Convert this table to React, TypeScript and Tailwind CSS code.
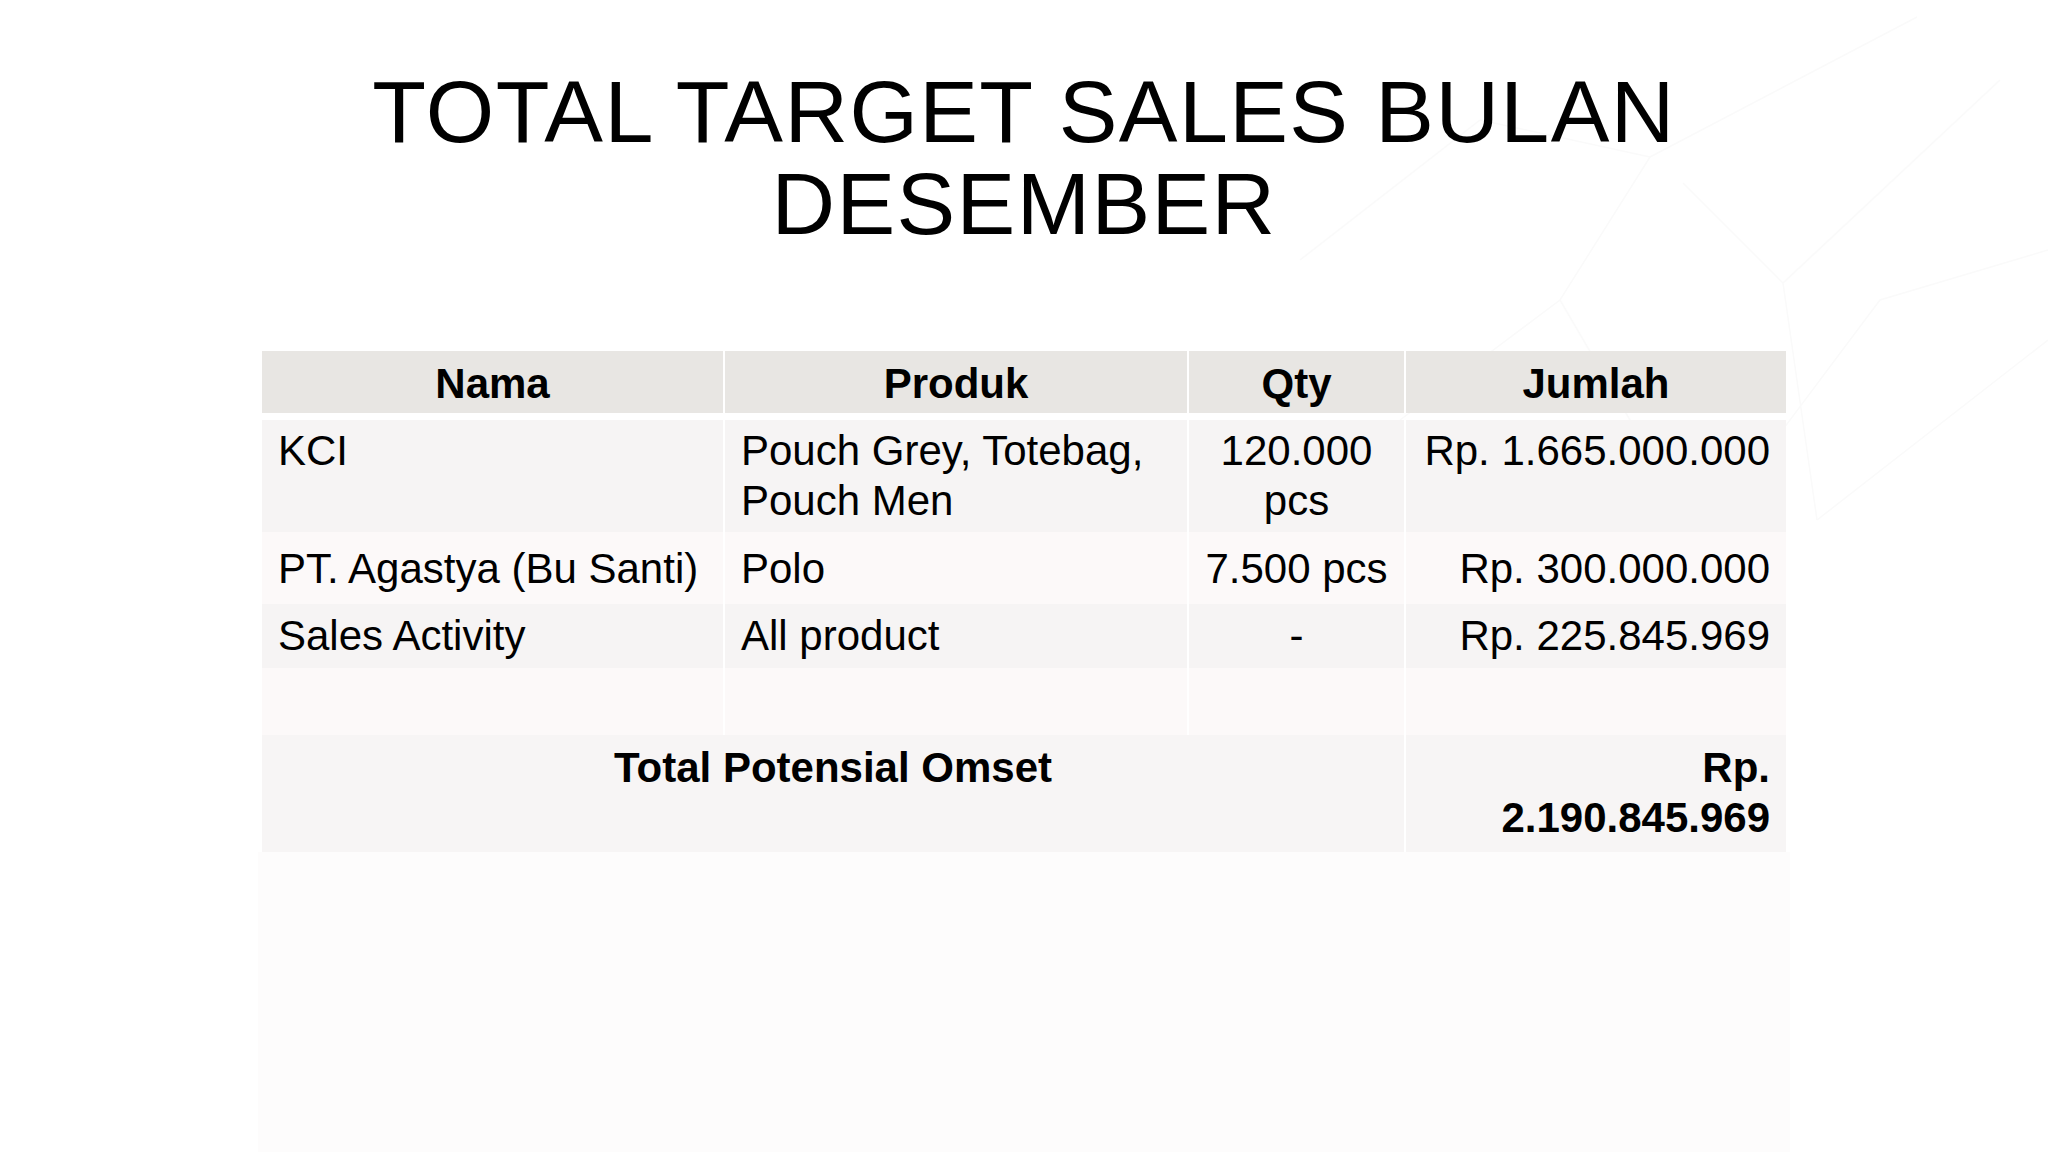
import React from "react";

type Cell = {
  text: React.ReactNode;
  align?: "left" | "center" | "right";
  bold?: boolean;
  span?: boolean;
  nowrap?: boolean;
};

const alignClass = (a?: string) =>
  a === "center" ? "text-center" : a === "right" ? "text-right" : "text-left";

function Row({
  cells,
  h,
  pt,
  bg,
  cols,
}: {
  cells: Cell[];
  h: string;
  pt: string;
  bg: string;
  cols: string;
}) {
  return (
    <div className={`grid gap-x-[2px] ${cols} ${h}`}>
      {cells.map((c, i) => (
        <div
          key={i}
          className={`${bg} ${pt} px-4 ${alignClass(c.align)} ${c.bold ? "font-bold" : "font-normal"} ${c.nowrap ? "whitespace-nowrap" : ""} ${c.span ? "col-span-3" : ""}`}
        >
          {c.text}
        </div>
      ))}
    </div>
  );
}

export default function App() {
  const cols = "grid-cols-[461px_462px_215px_380px]";
  return (
    <div className="relative w-[2048px] h-[1152px] bg-white overflow-hidden font-['Liberation_Sans',Arial,sans-serif] text-black">
      <svg
        className="absolute left-0 top-0 pointer-events-none"
        width="2048"
        height="1152"
        viewBox="0 0 2048 1152"
        fill="none"
      >
        <g stroke="#fafafa" strokeWidth="1.5">
          <path d="M1650 157 L1917 17" />
          <path d="M1683 183 L1783 283 L1817 520" />
          <path d="M1783 283 L2000 80" />
          <path d="M1817 520 L2048 340" />
          <path d="M1700 540 L1880 300 L2048 250" />
          <path d="M1480 120 L1650 157" />
          <path d="M1560 300 L1700 540" />
          <path d="M1300 260 L1480 120" />
          <path d="M1400 420 L1560 300 L1650 157" />
        </g>
      </svg>

      <div className="relative flex flex-col items-center h-full">
        <h1 className="pt-[66px] text-[88px] leading-[92px] font-normal text-center tracking-[1.4px]">
          TOTAL TARGET SALES BULAN
          <br />
          DESEMBER
        </h1>

        <div className="mt-[101px] w-[1524px] flex flex-col text-[42px] leading-[50px]">
          <div className="mb-[7px]">
            <Row
              cols={cols}
              h="h-[62px]"
              pt="pt-[8px]"
              bg="bg-[#e8e6e3]"
              cells={[
                { text: "Nama", align: "center", bold: true },
                { text: "Produk", align: "center", bold: true },
                { text: "Qty", align: "center", bold: true },
                { text: "Jumlah", align: "center", bold: true },
              ]}
            />
          </div>
          <Row
            cols={cols}
            h="h-[112px]"
            pt="pt-[6px]"
            bg="bg-[#f6f4f4]"
            cells={[
              { text: "KCI" },
              { text: "Pouch Grey, Totebag, Pouch Men" },
              {
                text: (
                  <>
                    120.000
                    <br />
                    pcs
                  </>
                ),
                align: "center",
              },
              { text: "Rp. 1.665.000.000", align: "right", nowrap: true },
            ]}
          />
          <Row
            cols={cols}
            h="h-[72px]"
            pt="pt-[12px]"
            bg="bg-[#fcf9f9]"
            cells={[
              { text: "PT. Agastya (Bu Santi)", nowrap: true },
              { text: "Polo" },
              { text: "7.500 pcs", align: "center", nowrap: true },
              { text: "Rp. 300.000.000", align: "right", nowrap: true },
            ]}
          />
          <Row
            cols={cols}
            h="h-[64px]"
            pt="pt-[7px]"
            bg="bg-[#f6f4f4]"
            cells={[
              { text: "Sales Activity" },
              { text: "All product" },
              { text: "-", align: "center" },
              { text: "Rp. 225.845.969", align: "right", nowrap: true },
            ]}
          />
          <Row
            cols={cols}
            h="h-[67px]"
            pt="pt-[7px]"
            bg="bg-[#fcf9f9]"
            cells={[{ text: "" }, { text: "" }, { text: "" }, { text: "" }]}
          />
          <div className={`grid gap-x-[2px] ${cols} h-[117px]`}>
            <div className="col-span-3 bg-[#f7f5f5] pt-[8px] px-4 text-center font-bold">
              Total Potensial Omset
            </div>
            <div className="bg-[#f7f5f5] pt-[8px] px-4 text-right font-bold">
              Rp.
              <br />
              2.190.845.969
            </div>
          </div>
        </div>
        <div className="flex-1 w-[1532px] bg-[#fdfcfc]" />
      </div>
    </div>
  );
}
